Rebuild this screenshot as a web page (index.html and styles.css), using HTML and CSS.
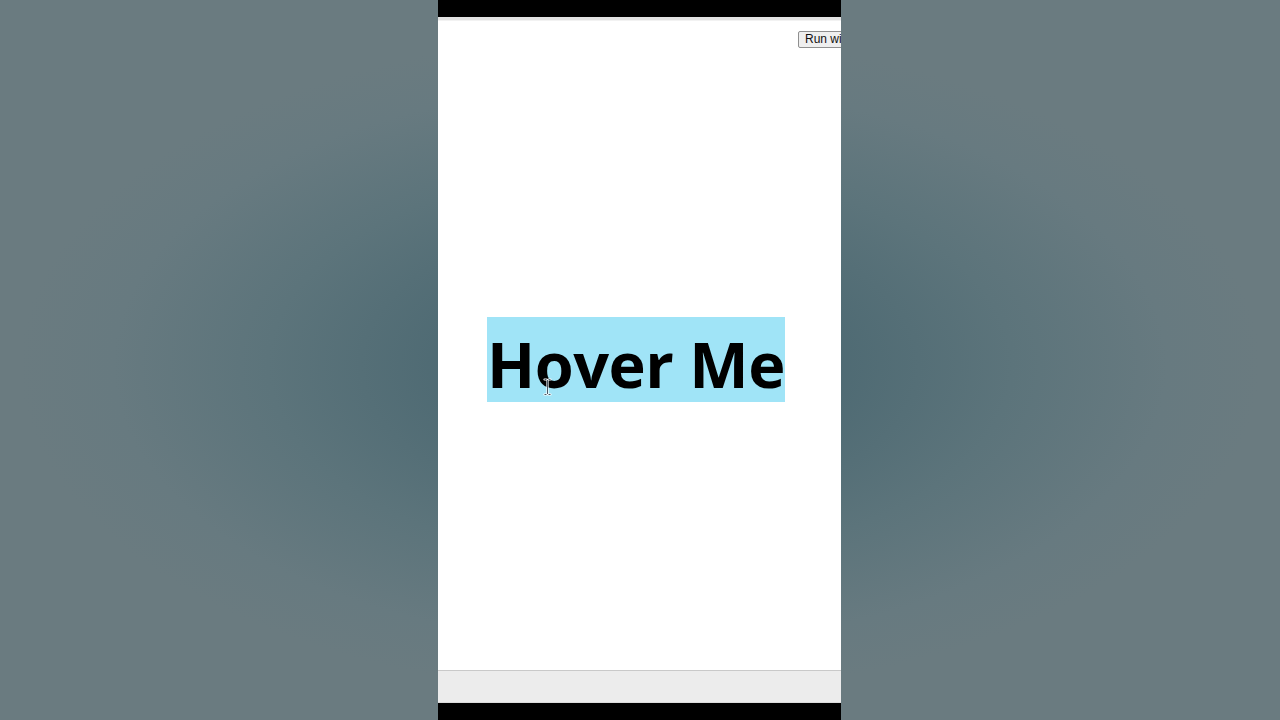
FILE: index.html
```html
<!DOCTYPE html>
<html lang="en">
<head>
<meta charset="utf-8">
<title>Hover Me</title>
<link rel="stylesheet" href="styles.css">
</head>
<body>
<div class="stage">
  <div class="side side-left"></div>
  <div class="phone">
    <div class="topbar"></div>
    <div class="topline"></div>
    <main class="content">
      <div class="toolbar">
        <button class="run">Run with JS</button>
      </div>
      <div class="demo">
        <h1 class="hover">Hover Me</h1>
        <svg class="cursor" width="9" height="18" viewBox="0 0 9 18" aria-hidden="true">
          <path d="M1.5 1.5h2M5.5 1.5h2M4.5 2v14M1.5 16.5h2M5.5 16.5h2" stroke="#ffffff" stroke-width="2.2" fill="none" stroke-linecap="round"/>
          <path d="M1.5 1.5h2M5.5 1.5h2M4.5 2v14M1.5 16.5h2M5.5 16.5h2" stroke="#4a5a66" stroke-width="1" fill="none"/>
        </svg>
      </div>
    </main>
    <div class="statusbar"></div>
    <div class="bottombar"></div>
  </div>
  <div class="side side-right"></div>
</div>
</body>
</html>
```
FILE: styles.css
```css
html, body {
  margin: 0;
  padding: 0;
  height: 100%;
}
body {
  background-color: #6a7b80;
  background-image: radial-gradient(ellipse 620px 330px at 640px 365px, #4a6770 0%, #4e6a73 30%, #5c747b 60%, #677a80 85%, #6a7b80 100%);
  font-family: "Liberation Sans", Arial, sans-serif;
  overflow: hidden;
}
.stage {
  display: flex;
  height: 720px;
}
.side-left {
  flex: 0 0 438px;
}
.side-right {
  flex: 1 1 0;
}
.phone {
  width: 403px;
  flex: 0 0 403px;
  display: flex;
  flex-direction: column;
  overflow: hidden;
  background: #ffffff;
}
.topbar {
  height: 17px;
  background: #000000;
}
.topline {
  height: 3px;
  background: #e2e2e2;
  border-bottom: 1px solid #f2f2f2;
}
.content {
  flex: 1 1 auto;
  background: #ffffff;
  display: flex;
  flex-direction: column;
}
.toolbar {
  padding: 8px 0 0 360px;
  height: 22px;
}
.run {
  white-space: nowrap;
  font-family: "Liberation Sans", Arial, sans-serif;
  font-size: 12px;
  color: #111111;
  background: #efefef;
  border: 1px solid #8f8f8f;
  border-radius: 2px;
  height: 17px;
  padding: 0 6px;
  line-height: 15px;
}
.demo {
  position: relative;
  padding: 266px 0 0 49px;
}
.hover {
  display: inline-block;
  margin: 0;
  background: #a0e4f7;
  color: #000000;
  font-family: "Open Sans", "Noto Sans", sans-serif;
  font-weight: 700;
  font-size: 63px;
  line-height: 77px;
  padding: 8px 0 0 0;
  letter-spacing: -0.5px;
}
.cursor {
  position: absolute;
  left: 105px;
  top: 327px;
}
.statusbar {
  height: 31px;
  background: #ececec;
  border-top: 1px solid #c9c9c9;
  border-bottom: 1px solid #dcdcdc;
}
.bottombar {
  height: 17px;
  background: #000000;
}
```
